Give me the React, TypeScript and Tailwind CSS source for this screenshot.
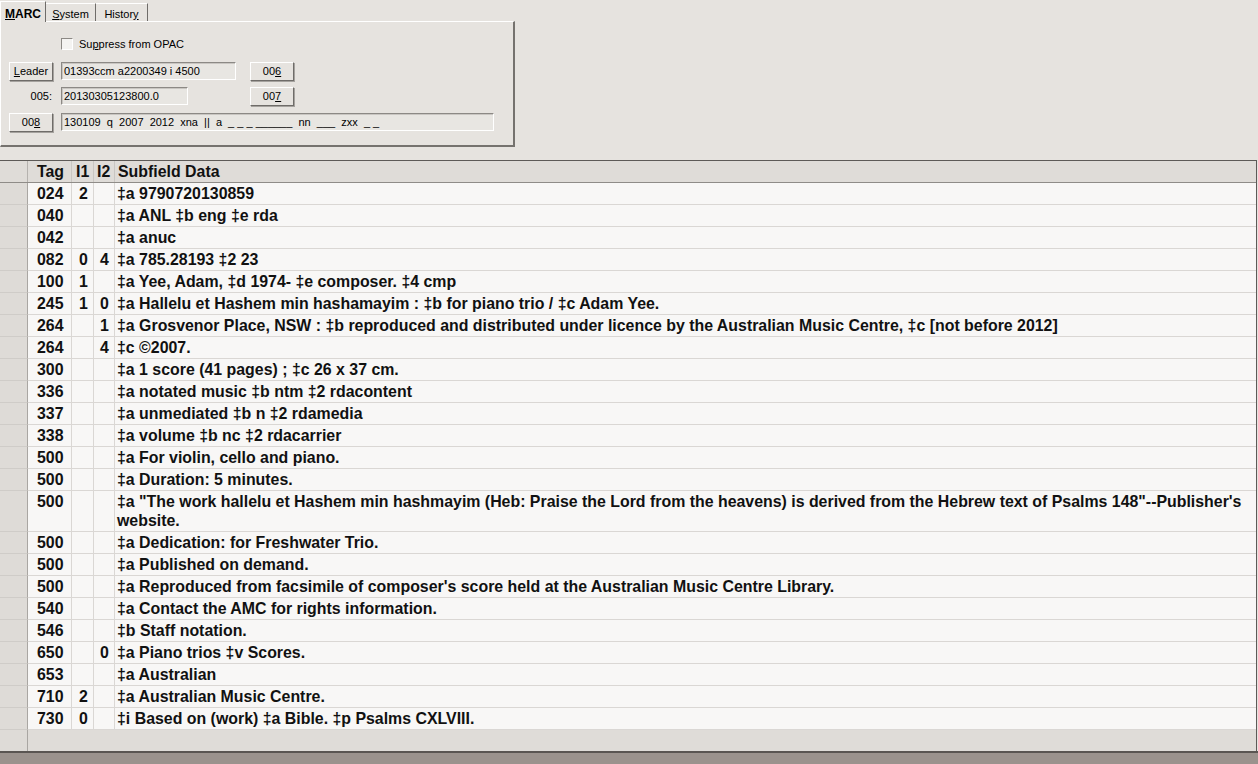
import React from 'react'

type Row = { tag: string; i1: string; i2: string; data: string }

const rows: Row[] = [
  { tag: '024', i1: '2', i2: '', data: '‡a 9790720130859' },
  { tag: '040', i1: '', i2: '', data: '‡a ANL ‡b eng ‡e rda' },
  { tag: '042', i1: '', i2: '', data: '‡a anuc' },
  { tag: '082', i1: '0', i2: '4', data: '‡a 785.28193 ‡2 23' },
  { tag: '100', i1: '1', i2: '', data: '‡a Yee, Adam, ‡d 1974- ‡e composer. ‡4 cmp' },
  { tag: '245', i1: '1', i2: '0', data: '‡a Hallelu et Hashem min hashamayim : ‡b for piano trio / ‡c Adam Yee.' },
  { tag: '264', i1: '', i2: '1', data: '‡a Grosvenor Place, NSW : ‡b reproduced and distributed under licence by the Australian Music Centre, ‡c [not before 2012]' },
  { tag: '264', i1: '', i2: '4', data: '‡c ©2007.' },
  { tag: '300', i1: '', i2: '', data: '‡a 1 score (41 pages) ; ‡c 26 x 37 cm.' },
  { tag: '336', i1: '', i2: '', data: '‡a notated music ‡b ntm ‡2 rdacontent' },
  { tag: '337', i1: '', i2: '', data: '‡a unmediated ‡b n ‡2 rdamedia' },
  { tag: '338', i1: '', i2: '', data: '‡a volume ‡b nc ‡2 rdacarrier' },
  { tag: '500', i1: '', i2: '', data: '‡a For violin, cello and piano.' },
  { tag: '500', i1: '', i2: '', data: '‡a Duration: 5 minutes.' },
  { tag: '500', i1: '', i2: '', data: '‡a "The work hallelu et Hashem min hashmayim (Heb: Praise the Lord from the heavens) is derived from the Hebrew text of Psalms 148"--Publisher\'s website.' },
  { tag: '500', i1: '', i2: '', data: '‡a Dedication: for Freshwater Trio.' },
  { tag: '500', i1: '', i2: '', data: '‡a Published on demand.' },
  { tag: '500', i1: '', i2: '', data: '‡a Reproduced from facsimile of composer\'s score held at the Australian Music Centre Library.' },
  { tag: '540', i1: '', i2: '', data: '‡a Contact the AMC for rights information.' },
  { tag: '546', i1: '', i2: '', data: '‡b Staff notation.' },
  { tag: '650', i1: '', i2: '0', data: '‡a Piano trios ‡v Scores.' },
  { tag: '653', i1: '', i2: '', data: '‡a Australian' },
  { tag: '710', i1: '2', i2: '', data: '‡a Australian Music Centre.' },
  { tag: '730', i1: '0', i2: '', data: '‡i Based on (work) ‡a Bible. ‡p Psalms CXLVIII.' },
]

function Btn({ children }: { children: React.ReactNode }) {
  return (
    <div className="flex h-[19px] w-[44px] items-center justify-center border border-t-white border-l-white border-r-[#6f6c69] border-b-[#6f6c69] bg-[#e6e3df] shadow-[1px_1px_0_#a5a29e]">
      {children}
    </div>
  )
}

function Field({ w, children }: { w: string; children: React.ReactNode }) {
  return (
    <div className={`${w} flex h-[18px] items-center whitespace-pre border border-t-[#8c8985] border-l-[#8c8985] border-r-white border-b-white bg-[#e8e6e2] pl-[2px] shadow-[inset_1px_1px_0_#c9c6c2]`}>
      {children}
    </div>
  )
}

export default function App() {
  return (
    <div
      className="flex h-[764px] w-[1258px] flex-col overflow-hidden bg-[#e6e3df] text-[11px] text-black"
      style={{ fontFamily: '"Liberation Sans", Arial, sans-serif' }}
    >
      {/* tabs */}
      <div className="flex h-[21px] items-end">
        <div className="relative z-10 -mb-[1px] flex h-[21px] w-[46px] items-start justify-center border-l border-t border-white border-r-[#6f6c69] border-r bg-[#e6e3df] pt-[3px] text-[12px] font-bold">
          <span><u>M</u>ARC</span>
        </div>
        <div className="flex h-[18px] w-[50px] items-start justify-center border-t border-white border-r border-r-[#6f6c69] pt-[2px]">
          <span><u>S</u>ystem</span>
        </div>
        <div className="flex h-[18px] w-[52px] items-start justify-center border-t border-white border-r border-r-[#6f6c69] pt-[2px]">
          <span>Histor<u>y</u></span>
        </div>
      </div>

      {/* MARC page */}
      <div className="flex h-[126px] w-[515px] flex-col border-l border-t border-white border-r-2 border-b-2 border-r-[#75726e] border-b-[#75726e]">
        <div className="flex items-center gap-[6px] pl-[60px] pt-[14px]">
          <div className="h-[12px] w-[12px] border border-t-[#8c8985] border-l-[#8c8985] border-r-white border-b-white bg-[#f4f3f1]" />
          <span>Su<u>p</u>press from OPAC</span>
        </div>
        <div className="mt-[9px] flex items-center pl-[8px]">
          <Btn><span><u>L</u>eader</span></Btn>
          <div className="ml-[8px]">
            <Field w="w-[175px]">01393ccm a2200349 i 4500</Field>
          </div>
          <div className="ml-[14px]">
            <Btn><span>00<u>6</u></span></Btn>
          </div>
        </div>
        <div className="mt-[6px] flex items-center pl-[8px]">
          <div className="w-[44px] pr-[1px] text-right">005:</div>
          <div className="ml-[8px]">
            <Field w="w-[127px]">20130305123800.0</Field>
          </div>
          <div className="ml-[62px]">
            <Btn><span>00<u>7</u></span></Btn>
          </div>
        </div>
        <div className="mt-[7px] flex items-center pl-[8px]">
          <Btn><span>00<u>8</u></span></Btn>
          <div className="ml-[8px]">
            <Field w="w-[433px]">{'130109  q  2007  2012  xna  ||  a  _ _ _ ______  nn  ___  zxx  _ _'}</Field>
          </div>
        </div>
      </div>

      {/* grid */}
      <div
        className="mt-[13px] flex w-[1257px] flex-1 flex-col border-t border-r border-[#5d5a57] font-bold text-[#111] text-[15.9px]"
        style={{ fontFamily: '"Liberation Sans", Arial, sans-serif' }}
      >
        <div className="grid h-[22px] grid-cols-[28px_44px_22px_21px_1fr] border-b border-[#8f8c88] bg-[#dfdcd8] leading-[21px]">
          <div className="border-r border-[#b5b2ae]" />
          <div className="border-r border-[#c9c6c2] pl-[9px]">Tag</div>
          <div className="border-r border-[#c9c6c2] pl-[4px]">I1</div>
          <div className="border-r border-[#c9c6c2] pl-[3px]">I2</div>
          <div className="pl-[3px]">Subfield Data</div>
        </div>
        {rows.map((r, i) => (
          <div key={i} className="grid grid-cols-[28px_44px_22px_21px_1fr] leading-[19px]">
            <div className="border-b border-r border-b-[#cfccc8] border-r-[#a9a6a2] bg-[#dedbd7]" />
            <div className="border-b border-r border-[#dad7d4] bg-[#f8f7f6] pb-[1px] pl-[9px] pt-[1px]">{r.tag}</div>
            <div className="border-b border-r border-[#dad7d4] bg-[#f8f7f6] pb-[1px] pl-[7px] pt-[1px]">{r.i1}</div>
            <div className="border-b border-r border-[#dad7d4] bg-[#f8f7f6] pb-[1px] pl-[6px] pt-[1px]">{r.i2}</div>
            <div className="border-b border-[#dad7d4] bg-[#f8f7f6] pb-[1px] pl-[2px] pr-[2px] pt-[1px]">{r.data}</div>
          </div>
        ))}
        <div className="flex flex-1">
          <div className="w-[28px] border-r border-[#a9a6a2] bg-[#dedbd7]" />
          <div className="flex-1 bg-[#dfdcd8]" />
        </div>
      </div>
      <div className="h-[13px] border-t-2 border-[#5a5552] bg-[#9b928d]" />
    </div>
  )
}
